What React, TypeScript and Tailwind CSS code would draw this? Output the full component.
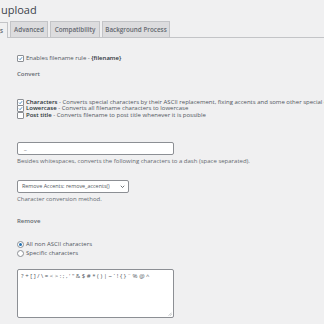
import React from "react";

function Check({ checked }: { checked: boolean }) {
  return (
    <span className="inline-flex w-[7px] h-[7px] shrink-0 items-center justify-center rounded-[1px] border border-[#8c8f94] bg-white">
      {checked && (
        <svg viewBox="0 0 10 10" className="w-[7px] h-[7px]">
          <path d="M2 5.2 L4.2 7.4 L8.2 2.4" fill="none" stroke="#2271b1" strokeWidth="1.5" />
        </svg>
      )}
    </span>
  );
}

function Radio({ checked }: { checked: boolean }) {
  return (
    <span className="inline-flex w-[7px] h-[7px] shrink-0 items-center justify-center rounded-full border border-[#8c8f94] bg-white">
      {checked && <span className="w-[3px] h-[3px] rounded-full bg-[#2271b1]" />}
    </span>
  );
}

export default function App() {
  const tab =
    "h-[16px] flex items-center justify-center border border-b-0 border-[#c3c4c7] bg-[#dcdcde] text-[6.3px] font-semibold text-[#646970] whitespace-nowrap";
  return (
    <div className="w-[324px] h-[324px] overflow-hidden bg-[#f0f0f1] font-['Open_Sans',sans-serif] text-[#50575e]">
      <h1 className="pt-[2px] pl-[1px] text-[11px] leading-[15px] text-[#3c434a]">upload</h1>
      <div className="mt-[4px] flex items-end gap-[2px] border-b border-[#c3c4c7] ml-[-20px] w-[344px]">
        <div className={tab + " w-[28px] bg-[#f0f0f1] text-[#3c434a] border-b border-b-[#f0f0f1] mb-[-1px] justify-end pr-[4px] overflow-hidden"}>
          <span>Settings</span>
        </div>
        <div className={tab + " w-[38px]"}>Advanced</div>
        <div className={tab + " w-[50px]"}>Compatibility</div>
        <div className={tab + " w-[68px]"}>Background Process</div>
      </div>

      <div className="pl-[17px] text-[6px] leading-[7px]">
        <div className="mt-[17px] flex items-center gap-[2px]">
          <Check checked />
          <span>
            Enables filename rule - <b className="font-semibold text-[#2c3338]">{"{filename}"}</b>
          </span>
        </div>

        <div className="mt-[9px] font-semibold text-[#646970]">Convert</div>

        <div className="mt-[21px] flex flex-col">
          <div className="flex items-center gap-[2px] whitespace-nowrap h-[6.5px]">
            <Check checked />
            <span>
              <b className="font-semibold text-[#2c3338]">Characters</b> - Converts special characters by their ASCII replacement, fixing accents and some other special characters
            </span>
          </div>
          <div className="flex items-center gap-[2px] whitespace-nowrap h-[6.5px]">
            <Check checked />
            <span>
              <b className="font-semibold text-[#2c3338]">Lowercase</b> - Converts all filename characters to lowercase
            </span>
          </div>
          <div className="flex items-center gap-[2px] whitespace-nowrap h-[6.5px]">
            <Check checked={false} />
            <span>
              <b className="font-semibold text-[#2c3338]">Post title</b> - Converts filename to post title whenever it is possible
            </span>
          </div>
        </div>

        <div className="mt-[23px] w-[157px] h-[13px] rounded-[2px] border border-[#8c8f94] bg-white px-[6px] flex items-center">
          _
        </div>
        <div className="mt-[3px] text-[#646970] whitespace-nowrap">
          Besides whitespaces, converts the following characters to a dash (space separated).
        </div>

        <div className="mt-[15px] w-[112px] h-[13px] rounded-[2px] border border-[#8c8f94] bg-white pl-[4px] pr-[3px] flex items-center gap-[2px] whitespace-nowrap text-[5.4px]">
          <span className="flex-1">Remove Accents: remove_accents()</span>
          <svg viewBox="0 0 10 10" className="w-[5px] h-[5px] shrink-0">
            <path d="M1.5 3.5 L5 7 L8.5 3.5" fill="none" stroke="#3c434a" strokeWidth="1.5" />
          </svg>
        </div>
        <div className="mt-[3px] text-[#646970]">Character conversion method.</div>

        <div className="mt-[15px] font-semibold text-[#646970]">Remove</div>

        <div className="mt-[15px] flex flex-col">
          <div className="flex items-center gap-[2px] h-[9px]">
            <Radio checked />
            <span>All non ASCII characters</span>
          </div>
          <div className="flex items-center gap-[2px] h-[9px]">
            <Radio checked={false} />
            <span>Specific characters</span>
          </div>
        </div>

        <div className="mt-[11px] w-[157px] h-[49px] rounded-[2px] border border-[#8c8f94] bg-white px-[3px] py-[3px] relative">
          <span className="whitespace-nowrap">{"? + [ ] / \\ = < > : ; , ' \" & $ # * ( ) | ~ ` ! { } ¨ % @ ^"}</span>
          <svg viewBox="0 0 6 6" className="absolute right-[1px] bottom-[1px] w-[4px] h-[4px]">
            <path d="M5.5 1 L1 5.5 M5.5 3.5 L3.5 5.5" stroke="#8c8f94" strokeWidth="0.8" />
          </svg>
        </div>
      </div>
    </div>
  );
}
